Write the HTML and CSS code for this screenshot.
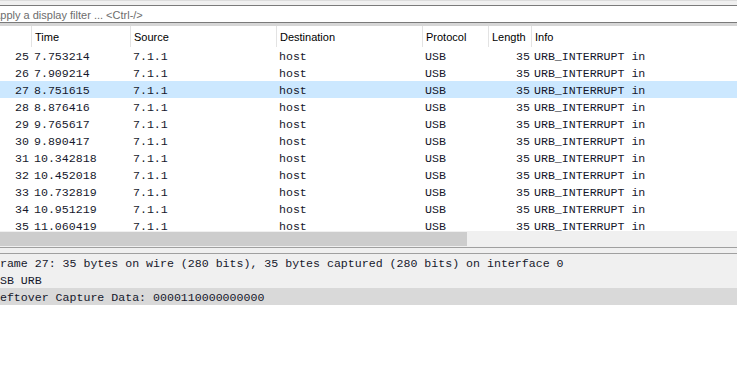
FILE: index.html
```html
<!DOCTYPE html>
<html lang="en">

<head>
    <meta charset="UTF-8">
    <title>usb capture</title>
    <link rel="stylesheet" href="styles.css">
</head>

<body>
    <div class="filter-bar">
        <div class="filter-input">Apply a display filter ... &lt;Ctrl-/&gt;</div>
    </div>

    <div class="packet-list">
        <div class="row header">
            <div class="cell no"></div>
            <div class="cell">Time</div>
            <div class="cell">Source</div>
            <div class="cell">Destination</div>
            <div class="cell">Protocol</div>
            <div class="cell">Length</div>
            <div class="cell">Info</div>
        </div>
        <div id="rows"></div>
    </div>

    <div class="hscroll">
        <div class="thumb"></div>
    </div>

    <div class="splitter"></div>

    <div class="details">
        <div class="tree-row">Frame 27: 35 bytes on wire (280 bits), 35 bytes captured (280 bits) on interface 0</div>
        <div class="tree-row">USB URB</div>
        <div class="tree-row selected">Leftover Capture Data: 0000110000000000</div>
    </div>

    <script>
        // packet number, time
        var packets = [
            [25, '7.753214'], [26, '7.909214'], [27, '8.751615'], [28, '8.876416'],
            [29, '9.765617'], [30, '9.890417'], [31, '10.342818'], [32, '10.452018'],
            [33, '10.732819'], [34, '10.951219'], [35, '11.060419']
        ];
        var html = '';
        packets.forEach(function (p) {
            var cls = p[0] === 27 ? 'row packet selected' : 'row packet';
            html += '<div class="' + cls + '">' +
                '<div class="cell no">' + p[0] + '</div>' +
                '<div class="cell">' + p[1] + '</div>' +
                '<div class="cell">7.1.1</div>' +
                '<div class="cell">host</div>' +
                '<div class="cell">USB</div>' +
                '<div class="cell len">35</div>' +
                '<div class="cell">URB_INTERRUPT in</div>' +
                '</div>';
        });
        document.getElementById('rows').innerHTML = html;
    </script>
</body>

</html>
```

FILE: styles.css
```css
body {
    margin: 0;
    width: 737px;
    height: 387px;
    overflow: hidden;
    background-color: #ffffff;
}

.filter-bar {
    padding-top: 5px;
    border-top: 1px solid #dcdcdc;
    background-color: #f0f0f0;
    border-bottom: 3px solid #d6d6d6;
}

.filter-input {
    height: 16px;
    line-height: 18px;
    background-color: #ffffff;
    border-top: 1px solid #7a7a7a;
    border-bottom: 1px solid #7a7a7a;
    margin-top: -1px;
    font-family: "Liberation Sans", Arial, sans-serif;
    font-size: 11px;
    color: #6d6d6d;
    text-indent: -7px;
    white-space: nowrap;
    overflow: hidden;
}

.packet-list {
    height: 205px;
    overflow: hidden;
}

.row {
    display: grid;
    grid-template-columns: 31px 99px 146px 146px 66px 43px 1fr;
    white-space: nowrap;
}

.cell {
    padding-left: 4px;
    overflow: hidden;
}

.header {
    height: 21px;
    line-height: 23px;
    font-family: "Liberation Sans", Arial, sans-serif;
    font-size: 11px;
    color: #000000;
}

.header .cell {
    border-left: 1px solid #e3e3e3;
    padding-left: 3px;
}

.header .cell.no {
    border-left: none;
}

.packet {
    height: 17px;
    line-height: 19px;
    font-family: "Liberation Mono", "DejaVu Sans Mono", monospace;
    font-size: 11.6px;
    color: #16182c;
}

.packet .cell {
    padding-left: 3px;
}

.packet .cell.no,
.packet .cell.len {
    text-align: right;
    padding-left: 0;
    padding-right: 1px;
}

.packet .cell.no {
    padding-right: 2px;
}

.packet.selected {
    background-color: #cce8ff;
}

.hscroll {
    height: 14px;
    padding: 1px 0;
    background-color: #f0f0f0;
}

.thumb {
    width: 467px;
    height: 14px;
    background-color: #cdcdcd;
}

.splitter {
    height: 5px;
    background-color: #f0f0f0;
    border-top: 1px solid #a0a0a0;
    border-bottom: 1px solid #a0a0a0;
}

.details {
    font-family: "Liberation Mono", "DejaVu Sans Mono", monospace;
    font-size: 11.6px;
    color: #16182c;
}

.tree-row {
    height: 17px;
    line-height: 19px;
    background-color: #f0f0f0;
    text-indent: -7px;
    white-space: nowrap;
    overflow: hidden;
}

.tree-row.selected {
    background-color: #d9d9d9;
}
```
